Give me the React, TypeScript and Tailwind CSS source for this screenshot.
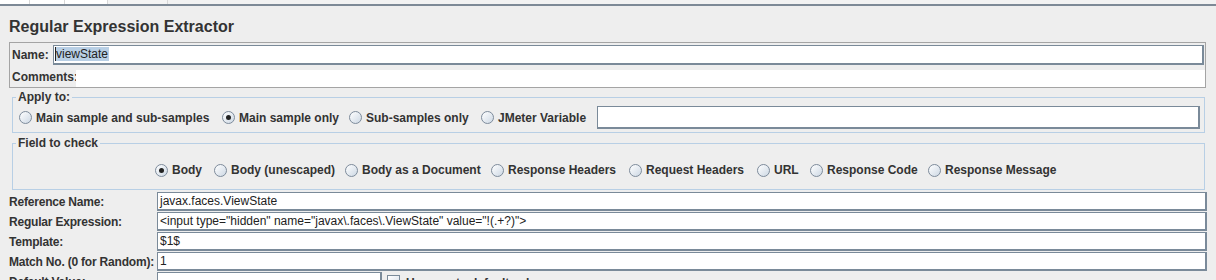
const font = { fontFamily: '"Liberation Sans", Arial, sans-serif' };

function Radio({ checked, label, w }: { checked?: boolean; label: string; w: string }) {
  return (
    <div className={`flex items-center gap-[4px] shrink-0 ${w}`}>
      <span className="w-[13px] h-[13px] rounded-full border border-[#7d8b9b] bg-linear-to-br from-white to-[#cdd8e4] flex items-center justify-center shrink-0">
        {checked && <span className="w-[5px] h-[5px] rounded-full bg-[#222]" />}
      </span>
      <span className="text-[12px] font-bold text-[#333] leading-[14px] whitespace-nowrap">{label}</span>
    </div>
  );
}

function Field({ label, value, short }: { label: string; value: string; short?: boolean }) {
  return (
    <div className="flex items-center h-[19px]">
      <div className="w-[148px] shrink-0 text-[12px] font-bold text-[#333] leading-[14px] whitespace-nowrap tracking-[-0.2px]">{label}</div>
      <div
        className={`h-[19px] bg-white border border-[#7a8a99] border-b-2 border-r-2 flex items-center pl-[2px] text-[12px] text-[#222] leading-[14px] whitespace-nowrap ${short ? "w-[225px]" : "flex-1"}`}
      >
        {value}
      </div>
      {short && (
        <div className="self-start flex items-start gap-[6px] ml-[5px] mt-[3px]">
          <span className="w-[13px] h-[13px] border border-[#7a8a99] bg-linear-to-br from-white to-[#d6dee8]" />
          <span className="text-[12px] font-bold text-[#333] leading-[14px] mt-[1px]">Use empty default value</span>
        </div>
      )}
    </div>
  );
}

const applyTo = [
  { label: "Main sample and sub-samples", w: "w-[203px]" },
  { label: "Main sample only", w: "w-[127px]", checked: true },
  { label: "Sub-samples only", w: "w-[132px]" },
  { label: "JMeter Variable", w: "w-[116px]" },
];

const fieldToCheck = [
  { label: "Body", w: "w-[59px]", checked: true },
  { label: "Body (unescaped)", w: "w-[131px]" },
  { label: "Body as a Document", w: "w-[146px]" },
  { label: "Response Headers", w: "w-[138px]" },
  { label: "Request Headers", w: "w-[128px]" },
  { label: "URL", w: "w-[53px]" },
  { label: "Response Code", w: "w-[118px]" },
  { label: "Response Message", w: "w-[134px]" },
];

export default function App() {
  return (
    <div className="w-[1216px] h-[280px] overflow-hidden bg-[#eeeeee] text-[#333]" style={font}>
      {/* strip of the toolbar above */}
      <div className="h-[4px] bg-[#f2f2f2] flex">
        <div className="w-[30px] bg-white border-r border-[#d8d8d8]" />
        <div className="w-[35px] bg-white border-r border-[#d8d8d8]" />
        <div className="w-[43px] bg-white border-r border-[#d8d8d8]" />
        <div className="w-[60px] bg-[#f4f4f4] border-r border-[#d8d8d8]" />
      </div>
      <div className="h-[2px] bg-[#7d8996]" />

      <div className="pl-[9px] pr-[10px]">
        <div className="pt-[13px] text-[16px] font-bold leading-[16px] text-[#333]">Regular Expression Extractor</div>

        {/* name / comments */}
        <div className="mt-[7px] border border-[#a4a4a4] h-[46px] flex flex-col">
          <div className="flex items-center h-[23px] pl-[2px] pr-[1px]">
            <span className="w-[41px] shrink-0 text-[12px] font-bold leading-[14px]">Name:</span>
            <div className="flex-1 h-[20px] bg-white border border-[#7a8a99] border-b-2 border-r-2 flex items-center pl-[1px] text-[12px] leading-[14px] text-[#222]">
              <span className="w-[1px] h-[14px] bg-[#222]" />
              <span className="bg-[#b8cfe5] pr-[1px]">viewState</span>
            </div>
          </div>
          <div className="flex items-end flex-1 pl-[2px]">
            <span className="w-[64px] shrink-0 text-[12px] font-bold leading-[14px] pb-[3px]">Comments:</span>
            <div className="flex-1 h-[17px] bg-white" />
          </div>
        </div>

        {/* apply to */}
        <fieldset className="mt-[2px] ml-[3px] mr-[1px] border border-[#b8cfe5]">
          <legend className="ml-[3px] px-[2px] text-[12px] font-bold leading-[14px]">Apply to:</legend>
          <div className="flex items-center pt-[2px] pb-[3px] pl-[6px] pr-[4px]">
            {applyTo.map((r) => (
              <Radio key={r.label} {...r} />
            ))}
            <div className="flex-1 h-[23px] bg-white border border-[#7a8a99] border-b-2 border-r-2" />
          </div>
        </fieldset>

        {/* field to check */}
        <fieldset className="mt-[3px] ml-[3px] mr-[1px] border border-[#b8cfe5]">
          <legend className="ml-[3px] px-[2px] text-[12px] font-bold leading-[14px]">Field to check</legend>
          <div className="flex items-center justify-center h-[39px] pt-[1px]">
            {fieldToCheck.map((r) => (
              <Radio key={r.label} {...r} />
            ))}
          </div>
        </fieldset>

        {/* settings */}
        <div className="mt-[2px] flex flex-col gap-[1px] mr-[-1px]">
          <Field label="Reference Name:" value="javax.faces.ViewState" />
          <Field label="Regular Expression:" value={'<input type="hidden" name="javax\\.faces\\.ViewState" value="!(.+?)">'} />
          <Field label="Template:" value="$1$" />
          <Field label="Match No. (0 for Random):" value="1" />
          <Field label="Default Value:" value="" short />
        </div>
      </div>
    </div>
  );
}
